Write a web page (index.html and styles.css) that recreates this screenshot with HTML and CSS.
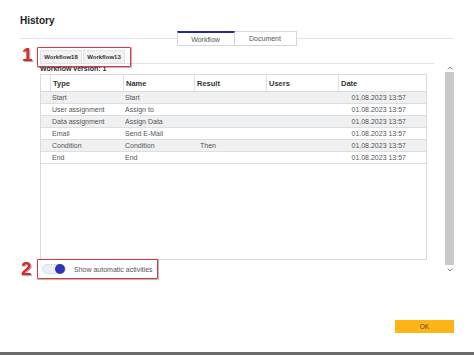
FILE: index.html
```html
<!DOCTYPE html>
<html>
<head>
<meta charset="utf-8">
<link rel="stylesheet" href="styles.css">
</head>
<body>
<div class="dialog">
  <h1 class="title">History</h1>
  <div class="tabbar">
    <div class="tab tab-active">Workflow</div>
    <div class="tab tab-doc">Document</div>
  </div>
  <div class="main">
    <div class="panel">
      <div class="subtabs">
        <div class="subtab">Workflow18</div>
        <div class="subtab">Workflow13</div>
      </div>
      <div class="version">Workflow version: 1</div>
      <div class="tablebox">
        <div class="grid head">
          <div class="c c0"></div>
          <div class="c">Type</div>
          <div class="c">Name</div>
          <div class="c">Result</div>
          <div class="c">Users</div>
          <div class="c c5">Date</div>
        </div>
        <div class="grid row alt">
          <div class="c c0"></div><div class="c">Start</div><div class="c">Start</div><div class="c"></div><div class="c"></div><div class="c date">01.08.2023 13:57</div>
        </div>
        <div class="grid row">
          <div class="c c0"></div><div class="c">User assignment</div><div class="c">Assign to</div><div class="c"></div><div class="c"></div><div class="c date">01.08.2023 13:57</div>
        </div>
        <div class="grid row alt">
          <div class="c c0"></div><div class="c">Data assignment</div><div class="c">Assign Data</div><div class="c"></div><div class="c"></div><div class="c date">01.08.2023 13:57</div>
        </div>
        <div class="grid row">
          <div class="c c0"></div><div class="c">Email</div><div class="c">Send E-Mail</div><div class="c"></div><div class="c"></div><div class="c date">01.08.2023 13:57</div>
        </div>
        <div class="grid row alt">
          <div class="c c0"></div><div class="c">Condition</div><div class="c">Condition</div><div class="c res">Then</div><div class="c"></div><div class="c date">01.08.2023 13:57</div>
        </div>
        <div class="grid row">
          <div class="c c0"></div><div class="c">End</div><div class="c">End</div><div class="c"></div><div class="c"></div><div class="c date">01.08.2023 13:57</div>
        </div>
      </div>
      <div class="toggle-row">
        <div class="track"><div class="knob"></div></div>
        <span class="toggle-label">Show automatic activities</span>
      </div>
    </div>
    <div class="scroll">
      <div class="arrow"><svg width="6" height="4" viewBox="0 0 6 4"><path d="M0.8 3.4 L3 1 L5.2 3.4" fill="none" stroke="#777" stroke-width="0.9"/></svg></div>
      <div class="thumb"></div>
      <div class="arrow"><svg width="6" height="4" viewBox="0 0 6 4"><path d="M0.8 0.6 L3 3 L5.2 0.6" fill="none" stroke="#777" stroke-width="0.9"/></svg></div>
    </div>
  </div>
  <div class="footer">
    <div class="ok">OK</div>
  </div>
  <div class="bottombar"></div>

  <div class="mark box1"></div>
  <div class="num num1">1</div>
  <div class="mark box2"></div>
  <div class="num num2">2</div>
</div>
</body>
</html>
```

FILE: styles.css
```css
html, body {
  margin: 0;
  padding: 0;
  background: #ffffff;
}
body {
  font-family: "Liberation Sans", Arial, sans-serif;
  color: #444;
}
.dialog {
  position: relative;
  width: 474px;
  height: 355px;
  overflow: hidden;
  display: flex;
  flex-direction: column;
  background: #fff;
}
.title {
  margin: 0;
  padding: 15px 0 0 20px;
  font-size: 10px;
  line-height: 12px;
  font-weight: bold;
  color: #222;
}
.tabbar {
  margin: 4px 21px 0 20px;
  display: flex;
  align-items: center;
}
.tabbar::before, .tabbar::after {
  content: "";
  flex: 1;
  height: 1px;
  background: #e2e2e2;
}
.tab {
  box-sizing: border-box;
  height: 15px;
  border: 1px solid #d3d6df;
  background: #fff;
  font-size: 7px;
  color: #555;
  display: flex;
  align-items: center;
  justify-content: center;
}
.tab-active {
  width: 58px;
  border-top: 2px solid #252b8c;
}
.tab-doc {
  width: 62px;
  border-left: none;
}
.main {
  display: flex;
  align-items: flex-start;
  margin: 4px 0 0 40px;
}
.panel {
  width: 394px;
  display: flex;
  flex-direction: column;
}
.subtabs {
  box-sizing: border-box;
  height: 14px;
  display: flex;
  border-bottom: 1px solid #e3e3e3;
}
.subtab {
  box-sizing: border-box;
  height: 13px;
  width: 42px;
  margin-right: 1px;
  background: #f2f2f2;
  border: 1px solid #e3e3e3;
  border-bottom: none;
  font-size: 6px;
  font-weight: bold;
  color: #333;
  display: flex;
  align-items: center;
  justify-content: center;
}
.version {
  height: 10px;
  line-height: 10px;
  font-size: 7px;
  font-weight: bold;
  color: #333;
}
.tablebox {
  box-sizing: border-box;
  width: 387px;
  height: 186px;
  border: 1px solid #dadada;
  background: #fff;
}
.grid {
  display: grid;
  grid-template-columns: 10px 73px 71px 72px 72px 1fr;
  box-sizing: border-box;
}
.c {
  padding-left: 2px;
  white-space: nowrap;
  overflow: hidden;
  display: flex;
  align-items: center;
}
.c0 {
  padding: 0;
}
.head {
  height: 17px;
  border-bottom: 1px solid #dcdcdc;
  font-size: 7.5px;
  font-weight: bold;
  color: #333;
}
.head .c {
  border-right: 1px solid #e0e0e0;
}
.head .c5 {
  border-right: none;
}
.row {
  height: 12px;
  border-bottom: 1px solid #dedede;
  font-size: 7px;
  color: #555;
}
.row .c {
  padding-left: 1px;
}
.row .res {
  padding-left: 5px;
}
.row.alt {
  background: #eff0f2;
}
.row .date {
  justify-content: flex-end;
  padding-right: 20px;
}
.toggle-row {
  height: 14px;
  margin-top: 2px;
  padding-left: 2px;
  display: flex;
  align-items: center;
  gap: 8px;
}
.track {
  box-sizing: border-box;
  width: 24px;
  height: 10px;
  border-radius: 5px;
  background: #eceef3;
  border: 1px solid #dde0e8;
  display: flex;
  align-items: center;
  justify-content: flex-end;
}
.knob {
  width: 10px;
  height: 10px;
  border-radius: 50%;
  background: #2b35b6;
  flex: none;
}
.toggle-label {
  font-size: 7px;
  color: #555;
}
.scroll {
  width: 9px;
  margin: 13px 0 0 11px;
  display: flex;
  flex-direction: column;
}
.arrow {
  height: 9px;
  display: flex;
  align-items: center;
  justify-content: center;
}
.thumb {
  height: 193px;
  background: #c9c9c9;
}
.footer {
  margin-top: auto;
  display: flex;
  justify-content: flex-end;
  padding: 0 20px 19px 0;
}
.ok {
  width: 59px;
  height: 13px;
  background: #fdb515;
  font-size: 6.5px;
  color: #5a4a20;
  display: flex;
  align-items: center;
  justify-content: center;
}
.bottombar {
  height: 3px;
  background: #6b6b6b;
}
.mark {
  position: absolute;
  box-sizing: border-box;
  border: 1.5px solid #d9393d;
  border-radius: 1px;
  box-shadow: 0.5px 0.5px 1px rgba(0,0,0,0.3);
}
.box1 {
  left: 37px;
  top: 47px;
  width: 94px;
  height: 20px;
}
.box2 {
  left: 37px;
  top: 259px;
  width: 121px;
  height: 20px;
}
.num {
  position: absolute;
  font-size: 19px;
  line-height: 19px;
  font-weight: bold;
  color: #d42a2a;
  text-shadow: 1px 1px 1px rgba(0,0,0,0.35);
}
.num1 {
  left: 22px;
  top: 45px;
}
.num2 {
  left: 21px;
  top: 259px;
}
```
